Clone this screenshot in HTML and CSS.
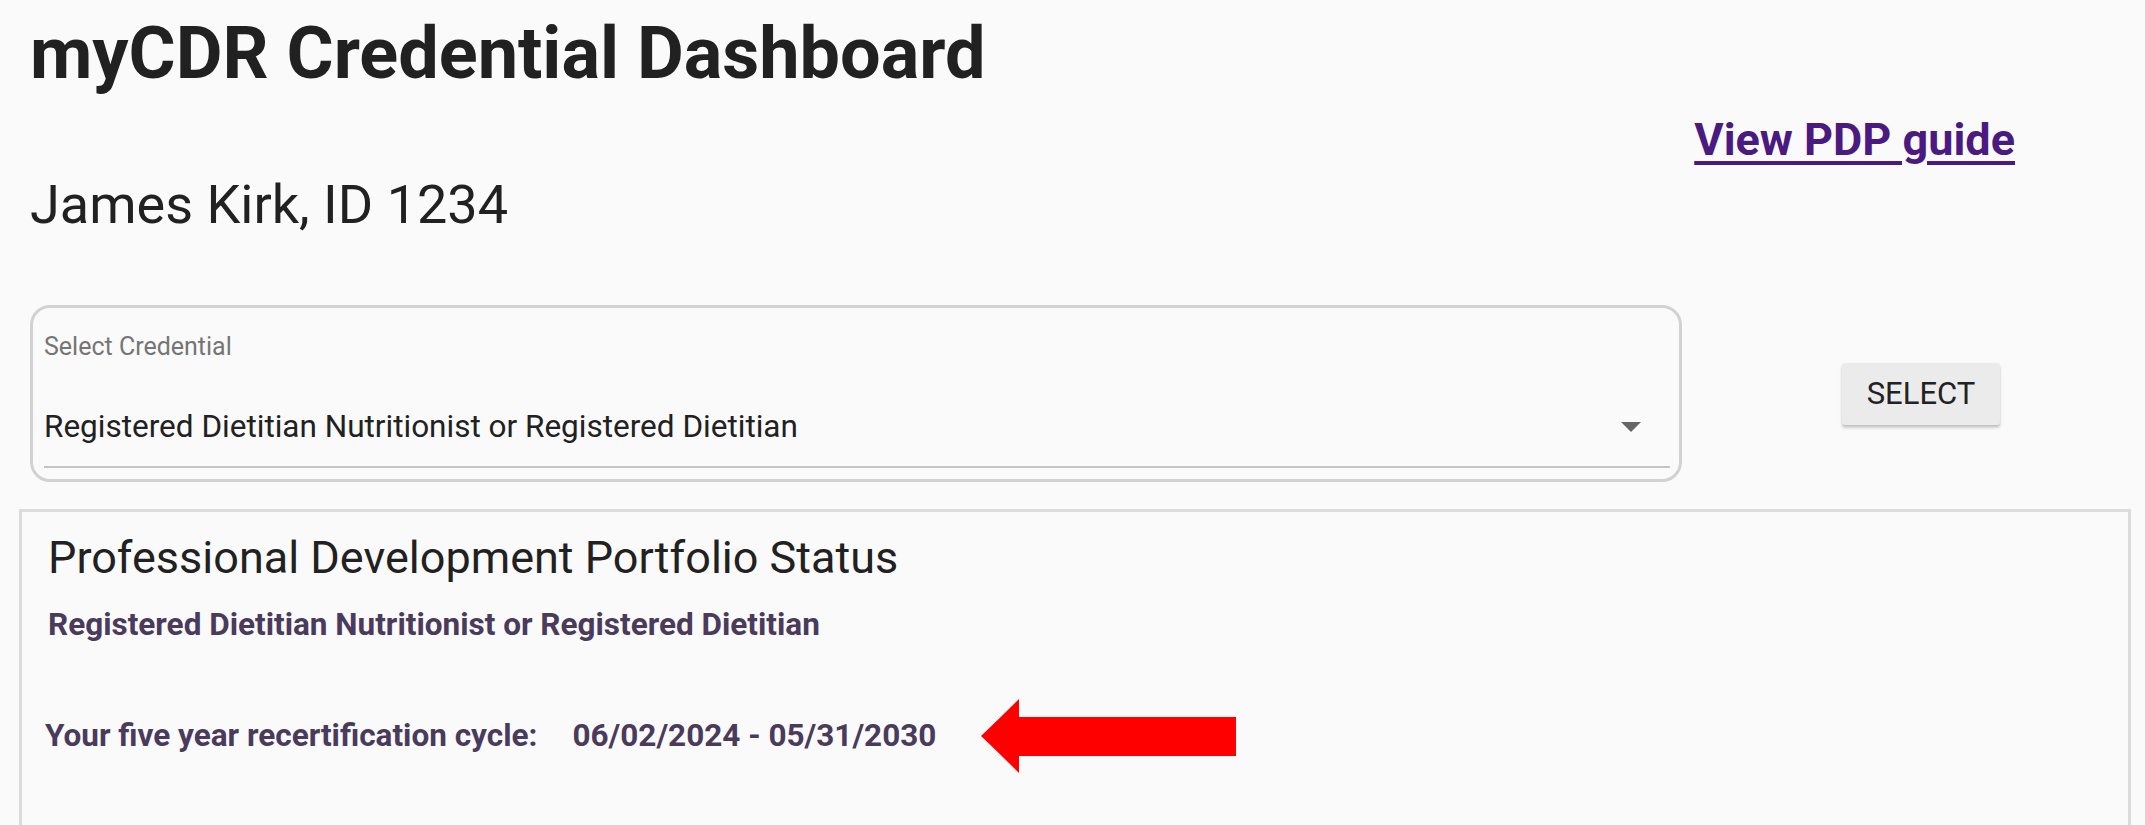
FILE: index.html
```html
<!DOCTYPE html>
<html lang="en">
<head>
<meta charset="utf-8">
<title>myCDR Credential Dashboard</title>
<link rel="stylesheet" href="styles.css">
</head>
<body>
<div class="page">
  <header class="header">
    <div class="header-main">
      <h1 class="title">myCDR Credential Dashboard</h1>
      <div class="person">James Kirk, ID 1234</div>
    </div>
    <a class="guide-link" href="#">View PDP guide</a>
  </header>

  <div class="select-row">
    <div class="select-box">
      <div class="select-label">Select Credential</div>
      <div class="select-field">
        <span class="select-value">Registered Dietitian Nutritionist or Registered Dietitian</span>
        <svg class="select-arrow" viewBox="0 0 20 10" width="20" height="10" aria-hidden="true"><path d="M0 0 L20 0 L10 10 Z"/></svg>
      </div>
    </div>
    <button class="select-btn" type="button">SELECT</button>
  </div>

  <section class="card">
    <h2 class="card-title">Professional Development Portfolio Status</h2>
    <div class="card-sub">Registered Dietitian Nutritionist or Registered Dietitian</div>
    <div class="cycle-row">
      <span class="cycle-label">Your five year recertification cycle:</span>
      <span class="cycle-dates">06/02/2024 - 05/31/2030</span>
      <svg class="cycle-arrow" viewBox="0 0 255 74" width="255" height="74" aria-hidden="true"><path d="M0 37 Q22 16 38 0 L38 18 L255 18 L255 57 L38 57 L38 74 Q22 58 0 37 Z"/></svg>
    </div>
  </section>
</div>
</body>
</html>
```

FILE: styles.css
```css
html, body {
  margin: 0;
  padding: 0;
  height: 825px;
  overflow: hidden;
  background: #fafafa;
}

body {
  font-family: Roboto, "Liberation Sans", Arial, sans-serif;
  color: #212121;
}

.page {
  padding: 0 14px 0 19px;
}

.header {
  display: flex;
  justify-content: space-between;
  align-items: flex-start;
  padding: 0 116px 0 11px;
}

.header-main {
  display: flex;
  flex-direction: column;
}

.title {
  margin: 18px 0 0 0;
  font-size: 72px;
  line-height: 1;
  font-weight: 700;
  color: #212121;
}

.person {
  margin-top: 88px;
  font-size: 54px;
  line-height: 1;
  font-weight: 400;
}

.guide-link {
  margin-top: 117px;
  font-size: 45px;
  line-height: 1;
  font-weight: 700;
  color: #4b1a80;
  text-decoration: underline;
  text-decoration-thickness: 4px;
  text-underline-offset: 6px;
}

.select-row {
  display: flex;
  align-items: center;
  gap: 160px;
  margin-top: 73px;
  padding-left: 11px;
}

.select-box {
  box-sizing: border-box;
  width: 1652px;
  height: 177px;
  border: 3px solid #d2d2d2;
  border-radius: 20px;
  padding: 26px 9px 0 11px;
}

.select-label {
  font-size: 25px;
  line-height: 1;
  color: #757575;
}

.select-field {
  display: flex;
  align-items: center;
  justify-content: space-between;
  margin-top: 52px;
  padding-bottom: 23px;
  border-bottom: 2px solid #c4c4c4;
}

.select-value {
  font-size: 31.5px;
  line-height: 1;
  color: #212121;
}

.select-arrow {
  fill: #666666;
  margin-right: 29px;
}

.select-btn {
  width: 158px;
  height: 62px;
  border: none;
  border-radius: 3px;
  background: #ebebeb;
  box-shadow: 0 3px 3px rgba(0, 0, 0, 0.18), 0 1px 2px rgba(0, 0, 0, 0.08);
  font-family: Roboto, "Liberation Sans", Arial, sans-serif;
  font-size: 31px;
  font-weight: 400;
  color: #222222;
  padding: 0;
}

.card {
  margin-top: 27px;
  height: 420px;
  border: 3px solid #dcdcdc;
  padding: 23px 26px 0 26px;
}

.card-title {
  margin: 0;
  font-size: 45px;
  line-height: 1;
  font-weight: 400;
  color: #212121;
}

.card-sub {
  margin-top: 29px;
  font-size: 31.5px;
  line-height: 1;
  font-weight: 700;
  color: #4a3b5c;
}

.cycle-row {
  display: flex;
  align-items: center;
  margin-top: 58px;
  font-size: 31.5px;
  line-height: 1;
  font-weight: 700;
  color: #4a3b5c;
}

.cycle-label {
  margin-left: -3px;
}

.cycle-dates {
  margin-left: 35px;
}

.cycle-arrow {
  margin-left: 45px;
  fill: #ff0000;
}
```
